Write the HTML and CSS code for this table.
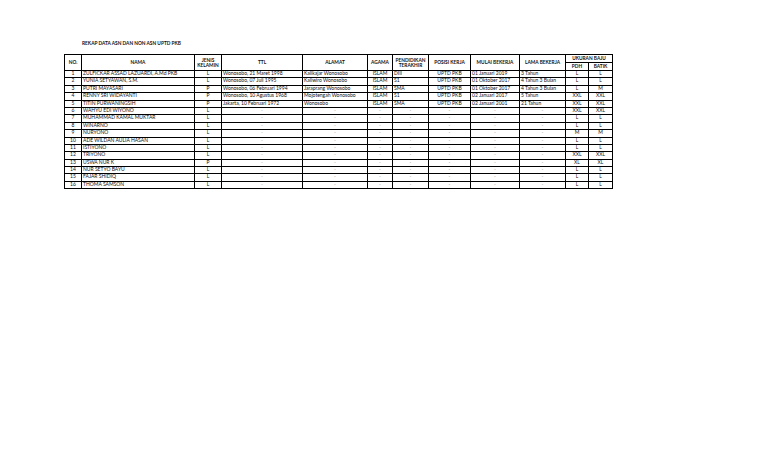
FILE: index.html
```html
<!DOCTYPE html>
<html>
<head>
<meta charset="utf-8">
<link rel="stylesheet" href="styles.css">
</head>
<body>
<div class="page">
  <div class="title">REKAP DATA ASN DAN NON ASN UPTD PKB</div>
  <table class="sheet">
    <colgroup>
      <col class="c-no"><col class="c-nama"><col class="c-jk"><col class="c-ttl"><col class="c-alamat"><col class="c-agama"><col class="c-pend"><col class="c-posisi"><col class="c-mulai"><col class="c-lama"><col class="c-pdh"><col class="c-batik">
    </colgroup>
    <thead>
      <tr class="h1">
        <th rowspan="2">NO.</th>
        <th rowspan="2">NAMA</th>
        <th rowspan="2">JENIS<br>KELAMIN</th>
        <th rowspan="2">TTL</th>
        <th rowspan="2">ALAMAT</th>
        <th rowspan="2">AGAMA</th>
        <th rowspan="2">PENDIDIKAN<br>TERAKHIR</th>
        <th rowspan="2">POSISI KERJA</th>
        <th rowspan="2">MULAI BEKERJA</th>
        <th rowspan="2">LAMA BEKERJA</th>
        <th colspan="2">UKURAN BAJU</th>
      </tr>
      <tr class="h2">
        <th>PDH</th>
        <th>BATIK</th>
      </tr>
    </thead>
    <tbody>
      <tr><td class="ct">1</td><td>ZULFICKAR ASSAD LAZUARDI, A.Md PKB</td><td class="ct">L</td><td>Wonosobo, 21 Maret 1998</td><td>Kalikajar Wonosobo</td><td class="ct">ISLAM</td><td>DIII</td><td class="ct">UPTD PKB</td><td>01 Januari 2019</td><td>3 Tahun</td><td class="ct">L</td><td class="ct">L</td></tr>
      <tr><td class="ct">2</td><td>YUNIA SETYAWAN, S.M.</td><td class="ct">L</td><td>Wonosobo, 07 Juli 1995</td><td>Kaliwiro Wonosobo</td><td class="ct">ISLAM</td><td>S1</td><td class="ct">UPTD PKB</td><td>01 Oktober 2017</td><td>4 Tahun 3 Bulan</td><td class="ct">L</td><td class="ct">L</td></tr>
      <tr><td class="ct">3</td><td>PUTRI MAYASARI</td><td class="ct">P</td><td>Wonosobo, 06 Februari 1994</td><td>Jaraprang Wonosobo</td><td class="ct">ISLAM</td><td>SMA</td><td class="ct">UPTD PKB</td><td>01 Oktober 2017</td><td>4 Tahun 3 Bulan</td><td class="ct">L</td><td class="ct">M</td></tr>
      <tr><td class="ct">4</td><td>RENNY SRI WIDAYANTI</td><td class="ct">P</td><td>Wonosobo, 10 Agustus 1968</td><td>Mojotengah Wonosobo</td><td class="ct">ISLAM</td><td>S1</td><td class="ct">UPTD PKB</td><td>02 Januari 2017</td><td>5 Tahun</td><td class="ct">XXL</td><td class="ct">XXL</td></tr>
      <tr><td class="ct">5</td><td>TITIN PURWANINGSIH</td><td class="ct">P</td><td>Jakarta, 10 Februari 1972</td><td>Wonosobo</td><td class="ct">ISLAM</td><td>SMA</td><td class="ct">UPTD PKB</td><td>02 Januari 2001</td><td>21 Tahun</td><td class="ct">XXL</td><td class="ct">XXL</td></tr>
      <tr><td class="ct">6</td><td>WAHYU EDI WIYONO</td><td class="ct">L</td><td class="dash">-</td><td class="dash">-</td><td class="dash">-</td><td class="dash">-</td><td class="dash">-</td><td class="dash">-</td><td class="dash">-</td><td class="ct">XXL</td><td class="ct">XXL</td></tr>
      <tr><td class="ct">7</td><td>MUHAMMAD KAMAL MUKTAR</td><td class="ct">L</td><td class="dash">-</td><td class="dash">-</td><td class="dash">-</td><td class="dash">-</td><td class="dash">-</td><td class="dash">-</td><td class="dash">-</td><td class="ct">L</td><td class="ct">L</td></tr>
      <tr><td class="ct">8</td><td>WINARNO</td><td class="ct">L</td><td class="dash">-</td><td class="dash">-</td><td class="dash">-</td><td class="dash">-</td><td class="dash">-</td><td class="dash">-</td><td class="dash">-</td><td class="ct">L</td><td class="ct">L</td></tr>
      <tr><td class="ct">9</td><td>NURYONO</td><td class="ct">L</td><td class="dash">-</td><td class="dash">-</td><td class="dash">-</td><td class="dash">-</td><td class="dash">-</td><td class="dash">-</td><td class="dash">-</td><td class="ct">M</td><td class="ct">M</td></tr>
      <tr><td class="ct">10</td><td>ADE WILDAN AULIA HASAN</td><td class="ct">L</td><td class="dash">-</td><td class="dash">-</td><td class="dash">-</td><td class="dash">-</td><td class="dash">-</td><td class="dash">-</td><td class="dash">-</td><td class="ct">L</td><td class="ct">L</td></tr>
      <tr><td class="ct">11</td><td>ISTIYONO</td><td class="ct">L</td><td class="dash">-</td><td class="dash">-</td><td class="dash">-</td><td class="dash">-</td><td class="dash">-</td><td class="dash">-</td><td class="dash">-</td><td class="ct">L</td><td class="ct">L</td></tr>
      <tr><td class="ct">12</td><td>TRIYONO</td><td class="ct">L</td><td class="dash">-</td><td class="dash">-</td><td class="dash">-</td><td class="dash">-</td><td class="dash">-</td><td class="dash">-</td><td class="dash">-</td><td class="ct">XXL</td><td class="ct">XXL</td></tr>
      <tr><td class="ct">13</td><td>USWA NUR K</td><td class="ct">P</td><td class="dash">-</td><td class="dash">-</td><td class="dash">-</td><td class="dash">-</td><td class="dash">-</td><td class="dash">-</td><td class="dash">-</td><td class="ct">XL</td><td class="ct">XL</td></tr>
      <tr><td class="ct">14</td><td>NUR SETYO BAYU</td><td class="ct">L</td><td class="dash">-</td><td class="dash">-</td><td class="dash">-</td><td class="dash">-</td><td class="dash">-</td><td class="dash">-</td><td class="dash">-</td><td class="ct">L</td><td class="ct">L</td></tr>
      <tr><td class="ct">15</td><td>FAJAR SHIDIQ</td><td class="ct">L</td><td class="dash">-</td><td class="dash">-</td><td class="dash">-</td><td class="dash">-</td><td class="dash">-</td><td class="dash">-</td><td class="dash">-</td><td class="ct">L</td><td class="ct">L</td></tr>
      <tr><td class="ct">16</td><td>THOMA SAMSON</td><td class="ct">L</td><td class="dash">-</td><td class="dash">-</td><td class="dash">-</td><td class="dash">-</td><td class="dash">-</td><td class="dash">-</td><td class="dash">-</td><td class="ct">L</td><td class="ct">L</td></tr>
    </tbody>
  </table>
</div>
</body>
</html>
```
FILE: styles.css
```css
html, body {
  margin: 0;
  padding: 0;
  background: #ffffff;
}
.page {
  padding: 40px 0 0 64px;
  font-family: Lato, "Liberation Sans", sans-serif;
  color: #111;
}
.title {
  margin-left: 18px;
  font-size: 4.8px;
  font-weight: 700;
  line-height: 6px;
  height: 14px;
  color: #111;
}
.sheet {
  border-collapse: collapse;
  table-layout: fixed;
  width: 548px;
}
.c-no { width: 17px; }
.c-nama { width: 113px; }
.c-jk { width: 27px; }
.c-ttl { width: 81px; }
.c-alamat { width: 65px; }
.c-agama { width: 25px; }
.c-pend { width: 36px; }
.c-posisi { width: 42px; }
.c-mulai { width: 49px; }
.c-lama { width: 46px; }
.c-pdh { width: 23px; }
.c-batik { width: 24px; }
.sheet th, .sheet td {
  border: 1px solid #000;
  padding: 0 1px;
  overflow: hidden;
  white-space: nowrap;
}
.sheet th {
  font-size: 4.8px;
  font-weight: 700;
  line-height: 5px;
  text-align: center;
  vertical-align: middle;
  color: #111;
}
.h1 { height: 8px; }
.h2 { height: 8px; }
.sheet td {
  font-size: 5px;
  line-height: 5px;
  height: 6.4px;
  vertical-align: top;
  color: #111;
  text-align: left;
}
.sheet td.ct { text-align: center; }
.sheet td.dash { text-align: center; color: #999; }
```
